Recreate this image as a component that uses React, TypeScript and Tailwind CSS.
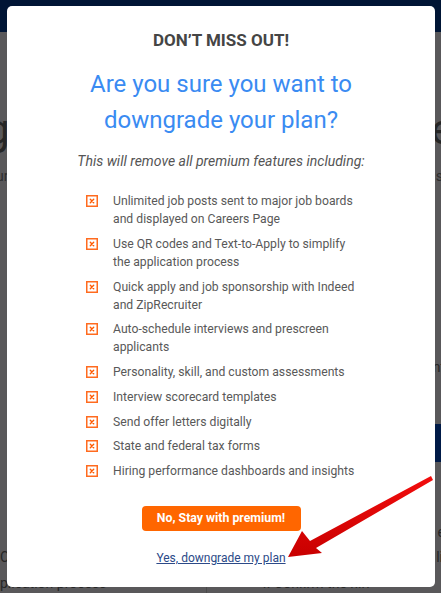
import React from "react";

const features = [
  "Unlimited job posts sent to major job boards and displayed on Careers Page",
  "Use QR codes and Text-to-Apply to simplify the application process",
  "Quick apply and job sponsorship with Indeed and ZipRecruiter",
  "Auto-schedule interviews and prescreen applicants",
  "Personality, skill, and custom assessments",
  "Interview scorecard templates",
  "Send offer letters digitally",
  "State and federal tax forms",
  "Hiring performance dashboards and insights",
];

function XBox() {
  return (
    <svg width="12" height="12" viewBox="0 0 12 12" className="mt-[3px] shrink-0">
      <rect x="0.75" y="0.75" width="10.5" height="10.5" fill="none" stroke="#ff6b1f" strokeWidth="1.5" />
      <path d="M4.3 4.3 L7.7 7.7 M7.7 4.3 L4.3 7.7" stroke="#ff5a00" strokeWidth="1.4" strokeLinecap="round" />
    </svg>
  );
}

function Backdrop() {
  // page behind the overlay, already dimmed
  return (
    <div className="flex h-full flex-col bg-[#59585a] text-[#262626]">
      <div className="h-8 shrink-0 bg-[#001535]" />
      <div className="mt-[78px] flex justify-between text-[42px] leading-[40px]">
        <span className="-ml-[14px]">g</span>
        <span className="-mr-[12px]">e</span>
      </div>
      <div className="mt-[16px] flex justify-between text-[14px] leading-5 text-[#2e2e2e]">
        <span className="-ml-[4px]">ur</span>
        <span className="-mr-[2px]">s</span>
      </div>
      <div className="mt-[37px] h-[6px] bg-[#6e2c00]" />
      <div className="mt-[134px] flex justify-end text-[14px] leading-5">
        <span className="-mr-[4px]">nt</span>
      </div>
      <div className="mt-[47px] flex justify-end">
        <div className="h-[38px] w-[10px] bg-[#001a47]" />
      </div>
      <div className="mt-[60px] flex justify-end text-[14px] leading-5">
        <span className="-mr-[4px]">e</span>
      </div>
      <div className="mt-[5px] flex justify-between text-[14px] leading-5">
        <span>C</span>
        <span className="-mr-[2px]">li</span>
      </div>
      <div className="mt-[6px] flex text-[14px] leading-5">
        <span className="w-[207px] border-r border-[#4a4a4a] pl-0">plication process</span>
        <span className="pl-[52px]">4. Confirm the hiri</span>
      </div>
    </div>
  );
}

export default function App() {
  return (
    <div className="relative h-[593px] w-[441px] overflow-hidden font-['Roboto',sans-serif]">
      <Backdrop />

      <div className="absolute left-[7px] top-[6px] flex h-[581px] w-[428px] flex-col items-center rounded-[5px] bg-white pt-[22px]">
        <h3 className="text-[17px] font-bold leading-6 text-[#454545]">DON’T MISS OUT!</h3>
        <h2 className="mt-[14px] w-[300px] text-center text-[24px] leading-[36px] text-[#3a8bf2]">
          Are you sure you want to downgrade your plan?
        </h2>
        <p className="mt-[13px] text-[14px] italic leading-5 text-[#555]">
          This will remove all premium features including:
        </p>
        <ul className="mt-[21px] flex w-[270px] flex-col gap-[6.75px]">
          {features.map((f) => (
            <li key={f} className="flex gap-[15px]">
              <XBox />
              <span className="text-[12.2px] leading-[18px] text-[#595959]">{f}</span>
            </li>
          ))}
        </ul>
        <button className="mt-[26px] h-[25px] w-[159px] rounded-[4px] bg-[#ff6600] text-[12.3px] font-bold text-white">
          No, Stay with premium!
        </button>
        <a href="#" className="mt-[18px] text-[12px] leading-[18px] text-[#2c4a88] underline">
          Yes, downgrade my plan
        </a>
      </div>

      <svg className="pointer-events-none absolute left-0 top-0" width="441" height="593" viewBox="0 0 441 593">
        <defs>
          <linearGradient id="arw" x1="0" y1="0" x2="0" y2="1">
            <stop offset="0" stopColor="#f20d0d" />
            <stop offset="1" stopColor="#c80000" />
          </linearGradient>
        </defs>
        <polygon
          points="288,557 302,531 310,541 431,476 433,480 316,548 322,553"
          fill="url(#arw)"
        />
      </svg>
    </div>
  );
}
